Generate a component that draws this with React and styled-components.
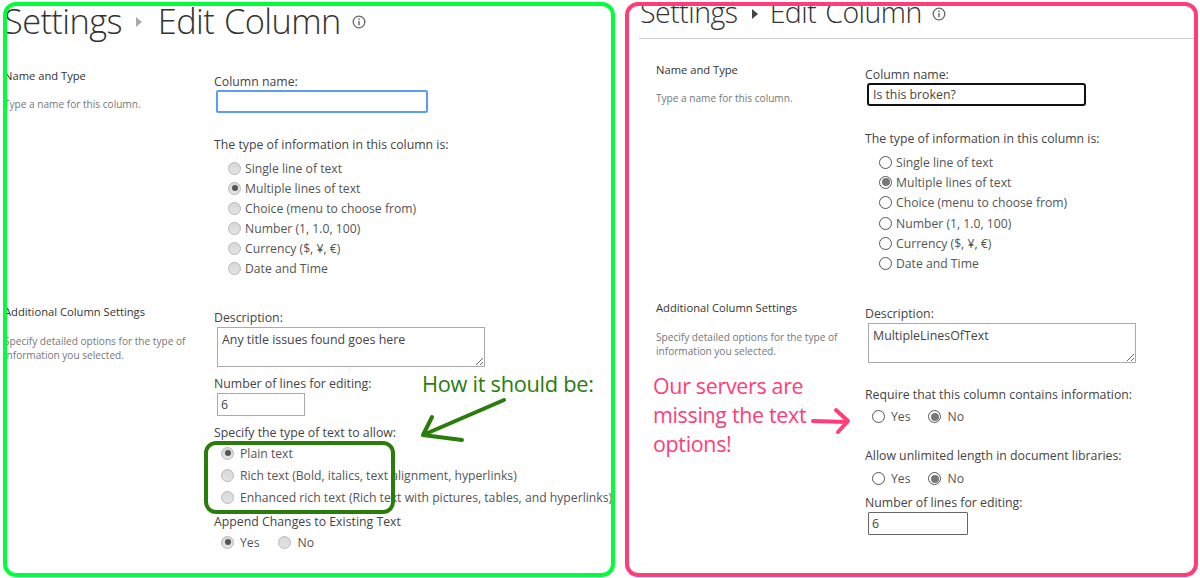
import React from "react";
import styled, { createGlobalStyle } from "styled-components";

const Global = createGlobalStyle`
  html, body { margin: 0; padding: 0; background: #fff; }
  body { font-family: "Open Sans", "Noto Sans", sans-serif; color: #444; overflow: hidden; }
  * { box-sizing: border-box; }
`;

const Page = styled.div`
  width: 1200px;
  height: 578px;
  display: flex;
  gap: 10px;
  padding: 2px 2px 1px 3px;
`;

const Panel = styled.div`
  position: relative;
  width: ${(p) => p.$w}px;
  height: 575px;
  border: 4px solid ${(p) => p.$accent};
  border-radius: 13px;
  overflow: hidden;
  flex: none;
  padding-left: ${(p) => p.$pad}px;
`;

const TitleRow = styled.div`
  display: flex;
  align-items: center;
  height: ${(p) => p.$h}px;
  margin: ${(p) => p.$top}px 0 ${(p) => p.$below || 0}px ${(p) => p.$left}px;
  font-weight: 300;
  font-size: ${(p) => p.$size}px;
  color: #333;
  white-space: pre;
  letter-spacing: ${(p) => p.$track}px;
  word-spacing: ${(p) => p.$words}px;
`;

const Crumb = styled.span`
  display: inline-block;
  width: 0;
  height: 0;
  border-style: solid;
  border-width: 5px 0 5px 6px;
  border-color: transparent transparent transparent ${(p) => p.$c};
  margin: 4px ${(p) => p.$after}px 0 ${(p) => p.$before}px;
`;

const InfoIcon = styled.svg`
  width: 14px;
  height: 14px;
  margin: 3px 0 0 ${(p) => p.$gap}px;
  fill: none;
  stroke: #666;
  flex: none;
`;

const Rule = styled.div`
  height: 1px;
  background: #ccc;
  margin-left: 5px;
`;

const Section = styled.section`
  display: grid;
  grid-template-columns: ${(p) => p.$side}px 1fr;
  margin-top: ${(p) => p.$top}px;
`;

const Side = styled.div`
  margin-left: ${(p) => p.$left}px;
`;

const SideTitle = styled.div`
  font-size: 11.2px;
  line-height: 16px;
  color: #333;
`;

const SideHint = styled.div`
  font-size: 10.1px;
  line-height: 14px;
  color: #777;
  margin-top: ${(p) => p.$top}px;
  width: 192px;
`;

const Main = styled.div`
  padding-top: ${(p) => p.$pad}px;
`;

const Label = styled.div`
  font-size: 12.3px;
  line-height: 16px;
  color: #444;
  white-space: nowrap;
  margin-top: ${(p) => p.$top || 0}px;
`;

const TextBox = styled.input`
  display: block;
  width: ${(p) => p.$w}px;
  height: 23px;
  margin: ${(p) => p.$mt || 0}px 0 0 ${(p) => p.$left}px;
  padding: 0 ${(p) => p.$padX || 3}px;
  font: 12.3px "Open Sans", sans-serif;
  color: #444;
  outline: none;
  border: ${(p) => p.$border};
  border-radius: ${(p) => p.$radius || 0}px;
  background: #fff;
`;

const TextArea = styled.textarea`
  display: block;
  width: 268px;
  height: 40px;
  margin: 1px 0 0 3px;
  padding: 3px 4px;
  font: 12.4px "Open Sans", sans-serif;
  color: #444;
  border: 1px solid #aaa;
  border-radius: 0;
  outline: none;
  resize: both;
`;

const RadioList = styled.div`
  display: flex;
  flex-direction: column;
  margin: ${(p) => p.$top}px 0 0 ${(p) => p.$left}px;
  row-gap: ${(p) => p.$gap}px;
`;

const RadioRow = styled.div`
  display: flex;
  align-items: center;
  height: 20px;
  font-size: 12.2px;
  color: #555;
  white-space: nowrap;
  gap: ${(p) => p.$gap}px;
`;

const InlineRadios = styled.div`
  display: flex;
  margin: ${(p) => p.$top}px 0 0 ${(p) => p.$left}px;
  column-gap: ${(p) => p.$gap}px;
`;

const Dot = styled.span`
  position: relative;
  flex: none;
  width: 13px;
  height: 13px;
  border-radius: 50%;
  background: ${(p) => (p.$flat ? "#fff" : "linear-gradient(#d8d8d8, #e4e4e4)")};
  border: 1px solid ${(p) => (p.$flat ? "#555" : "#b8b8b8")};
  display: flex;
  align-items: center;
  justify-content: center;
  &::after {
    content: "";
    display: ${(p) => (p.$on ? "block" : "none")};
    width: ${(p) => (p.$flat ? 8 : 6)}px;
    height: ${(p) => (p.$flat ? 8 : 6)}px;
    border-radius: 50%;
    background: ${(p) => (p.$flat ? "#777" : "#555")};
  }
`;

const Note = styled.div`
  position: absolute;
  left: ${(p) => p.$x}px;
  top: ${(p) => p.$y}px;
  font-family: "Open Sans", sans-serif;
  font-size: ${(p) => p.$size}px;
  line-height: ${(p) => p.$lh}px;
  color: ${(p) => p.$c};
  white-space: nowrap;
  letter-spacing: -0.3px;
`;

const Callout = styled.div`
  position: absolute;
  left: 197px;
  top: 435px;
  width: 191px;
  height: 73px;
  border: 4px solid #2a7d0a;
  border-radius: 12px;
`;

const Scribble = styled.svg`
  position: absolute;
  left: ${(p) => p.$x}px;
  top: ${(p) => p.$y}px;
  fill: none;
  stroke: ${(p) => p.$c};
  stroke-width: 4;
  stroke-linecap: round;
  stroke-linejoin: round;
`;

const Info = ({ gap }) => (
  <InfoIcon $gap={gap} viewBox="0 0 14 14">
    <circle cx="7" cy="7" r="5.8" strokeWidth="1.3" />
    <path d="M7 6v4.2M7 3.6v1.3" strokeWidth="1.5" />
  </InfoIcon>
);

const Radio = ({ label, on, flat, gap }) => (
  <RadioRow $gap={gap}>
    <Dot $on={on} $flat={flat} />
    {label}
  </RadioRow>
);

const types = [
  ["Single line of text"],
  ["Multiple lines of text", true],
  ["Choice (menu to choose from)"],
  ["Number (1, 1.0, 100)"],
  ["Currency ($, ¥, €)"],
  ["Date and Time"],
];

const NAME_HINT = "Type a name for this column.";
const MORE_HINT = "Specify detailed options for the type of information you selected.";

export default function App() {
  return (
    <Page>
      <Global />
      <Panel $w={612} $accent="#00ff38" $pad={0}>
        <TitleRow $h={36} $top={-4} $left={-3} $size={34.4} $track={-0.6} $words={1.5}>
          Settings
          <Crumb $c="#aaa" $before={14} $after={16} />
          Edit Column
          <Info gap={11} />
        </TitleRow>
        <Section $side={207} $top={30}>
          <Side $left={-3}>
            <SideTitle>Name and Type</SideTitle>
            <SideHint $top={13}>{NAME_HINT}</SideHint>
          </Side>
          <Main $pad={6}>
            <Label>Column name:</Label>
            <TextBox $w={212} $left={2} $border="2px solid #5a9ef0" $radius={2} />
            <Label $top={24}>The type of information in this column is:</Label>
            <RadioList $top={5} $left={14} $gap={0}>
              {types.map(([t, on]) => (
                <Radio key={t} label={t} on={on} gap={4} />
              ))}
            </RadioList>
          </Main>
        </Section>
        <Section $side={207} $top={26}>
          <Side $left={-3}>
            <SideTitle>Additional Column Settings</SideTitle>
            <SideHint $top={14}>{MORE_HINT}</SideHint>
          </Side>
          <Main $pad={6}>
            <Label>Description:</Label>
            <TextArea readOnly defaultValue="Any title issues found goes here" />
            <Label $top={9}>Number of lines for editing:</Label>
            <TextBox $w={88} $left={3} $mt={1} $border="1px solid #aaa" defaultValue="6" readOnly />
            <Label $top={9}>Specify the type of text to allow:</Label>
            <RadioList $top={2} $left={7} $gap={2}>
              <Radio label="Plain text" on gap={6} />
              <Radio label="Rich text (Bold, italics, text alignment, hyperlinks)" gap={6} />
              <Radio label="Enhanced rich text (Rich text with pictures, tables, and hyperlinks)" gap={6} />
            </RadioList>
            <Label $top={7}>Append Changes to Existing Text</Label>
            <InlineRadios $top={2} $left={7} $gap={19}>
              <Radio label="Yes" on gap={6} />
              <Radio label="No" gap={6} />
            </InlineRadios>
          </Main>
        </Section>
        <Callout />
        <Note $x={415} $y={364} $size={21.8} $lh={28} $c="#2a7d0a">How it should be:</Note>
        <Scribble $x={405} $y={390} $c="#2a7d0a" width="100" height="55" viewBox="0 0 100 55">
          <path d="M92 4 L11 39 M11 39 L20 21 M11 39 L50 44" />
        </Scribble>
      </Panel>
      <Panel $w={573} $accent="#ff3d78" $pad={5}>
        <TitleRow $h={32} $top={-10} $below={10} $left={6} $size={28.5} $track={-0.5} $words={2}>
          Settings
          <Crumb $c="#444" $before={14} $after={12} />
          Edit Column
          <Info gap={10} />
        </TitleRow>
        <Rule />
        <Section $side={231} $top={23}>
          <Side $left={22}>
            <SideTitle>Name and Type</SideTitle>
            <SideHint $top={13}>{NAME_HINT}</SideHint>
          </Side>
          <Main $pad={5}>
            <Label>Column name:</Label>
            <TextBox
              $w={219}
              $left={2}
              $padX={4}
              $border="2px solid #111"
              $radius={3}
              defaultValue="Is this broken?"
              readOnly
            />
            <Label $top={25}>The type of information in this column is:</Label>
            <RadioList $top={5} $left={14} $gap={0.4}>
              {types.map(([t, on]) => (
                <Radio key={t} label={t} on={on} flat gap={4} />
              ))}
            </RadioList>
          </Main>
        </Section>
        <Section $side={231} $top={26}>
          <Side $left={22}>
            <SideTitle>Additional Column Settings</SideTitle>
            <SideHint $top={14}>{MORE_HINT}</SideHint>
          </Side>
          <Main $pad={6}>
            <Label>Description:</Label>
            <TextArea readOnly defaultValue="MultipleLinesOfText" />
            <Label $top={24}>Require that this column contains information:</Label>
            <InlineRadios $top={4} $left={7} $gap={18}>
              <Radio label="Yes" flat gap={6} />
              <Radio label="No" on flat gap={6} />
            </InlineRadios>
            <Label $top={21}>Allow unlimited length in document libraries:</Label>
            <InlineRadios $top={5} $left={7} $gap={18}>
              <Radio label="Yes" flat gap={6} />
              <Radio label="No" on flat gap={6} />
            </InlineRadios>
            <Label $top={6}>Number of lines for editing:</Label>
            <TextBox $w={100} $left={3} $mt={1} $border="1px solid #666" $radius={1} defaultValue="6" readOnly />
          </Main>
        </Section>
        <Note $x={24} $y={365} $size={21.4} $lh={29} $c="#ff3d78">
          Our servers are
          <br />
          missing the text
          <br />
          options!
        </Note>
        <Scribble $x={181} $y={400} $c="#ff3d78" width="44" height="36" viewBox="0 0 44 36">
          <path d="M3 15 L37 16 M26 4 L38 15 L28 26" />
        </Scribble>
      </Panel>
    </Page>
  );
}
